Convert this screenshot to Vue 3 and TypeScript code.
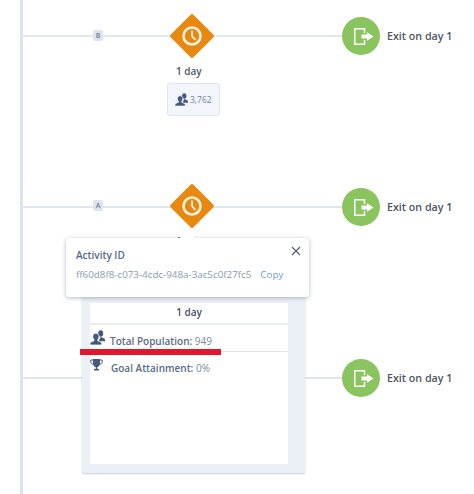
<script setup lang="ts">
interface Lane { id: string; y: number; badgeX: number }
const lanes: Lane[] = [
  { id: 'B', y: 36, badgeX: 98 },
  { id: 'A', y: 206, badgeX: 98 }
]
const exits: number[] = [36, 207, 378]
</script>

<template>
  <div class="canvas">
    <div class="trunk"></div>
    <div class="wire" :style="{ top: '35px' }"></div>
    <div class="wire" :style="{ top: '206px' }"></div>
    <div class="wire" :style="{ top: '377px' }"></div>

    <template v-for="lane in lanes" :key="lane.id">
      <span class="badge" :style="{ top: lane.y - 6 + 'px', left: lane.badgeX - 5 + 'px' }">{{ lane.id }}</span>
      <div class="diamond-wrap" :style="{ top: lane.y - 23 + 'px' }">
        <svg width="46" height="46" viewBox="0 0 46 46">
          <rect x="7" y="7" width="32" height="32" rx="2" transform="rotate(45 23 23)" fill="#e8880f" />
          <circle cx="23" cy="23" r="8.500" fill="none" stroke="#fdf3e3" stroke-width="2.600" />
          <path d="M23 17.500V23.200L26.500 27" fill="none" stroke="#fdf3e3" stroke-width="1.800" />
        </svg>
      </div>
      <div class="day-label" :style="{ top: lane.y + 28 + 'px' }">1 day</div>
    </template>

    <div class="count-box">
      <svg class="people" width="13" height="13" viewBox="0 0 14 14">
        <ellipse cx="10" cy="3.300" rx="2.300" ry="3" fill="#42597c" />
        <path d="M10 6.500L13 7.800c.6.300 1 .7 1 1.300V10.500H8Z" fill="#42597c" />
        <path d="M0 14V12.500c0-.6.3-1 1-1.300L3.800 10V9C3 8.300 2.600 7.300 2.600 6.100 2.600 4.300 3.800 3 5.500 3S8.400 4.300 8.400 6.100C8.400 7.300 8 8.300 7.200 9v1l2.800 1.200c.7.300 1 .7 1 1.300V14Z" fill="#42597c" stroke="#f2f5fa" stroke-width=".7" />
      </svg>
      <span>3,762</span>
    </div>

    <div class="exit" v-for="y in exits" :key="y" :style="{ top: y - 19 + 'px' }">
      <div class="exit-circle">
        <svg width="20" height="17" viewBox="0 0 20 17">
          <path d="M10.500 5V.8H.8V16.200H10.500V12" fill="none" stroke="#fff" stroke-width="1.500" />
          <path d="M7.500 6.500H13V4.300L19.500 8.500L13 12.700V10.500H7.500Z" fill="#fff" />
        </svg>
      </div>
      <span class="exit-text">Exit on day 1</span>
    </div>

    <div class="detail-card">
      <div class="detail-inner">
        <div class="detail-head">1 day</div>
        <div class="detail-row first">
          <svg width="15" height="15" viewBox="0 0 14 14">
            <ellipse cx="10" cy="3.300" rx="2.300" ry="3" fill="#42597c" />
            <path d="M10 6.500L13 7.800c.6.300 1 .7 1 1.300V10.500H8Z" fill="#42597c" />
            <path d="M0 14V12.500c0-.6.3-1 1-1.300L3.800 10V9C3 8.300 2.600 7.300 2.600 6.100 2.600 4.300 3.800 3 5.500 3S8.400 4.300 8.400 6.100C8.400 7.300 8 8.300 7.200 9v1l2.800 1.200c.7.300 1 .7 1 1.300V14Z" fill="#42597c" stroke="#fff" stroke-width=".7" />
          </svg>
          <span><b>Total Population:</b> 949</span>
        </div>
        <div class="detail-row second">
          <svg width="13" height="14" viewBox="0 0 13 14">
            <path d="M3 1H10V5.500C10 7.500 8.500 8.800 7.300 9V11H9V12.500H4V11H5.700V9C4.500 8.800 3 7.500 3 5.500Z" fill="#42597c" />
            <path d="M3 2H.8V3.800C.8 5.200 1.800 6.200 3.300 6.300M10 2H12.200V3.800C12.200 5.200 11.200 6.200 9.700 6.300" fill="none" stroke="#42597c" stroke-width="1" />
          </svg>
          <span class="goal"><b>Goal Attainment:</b> 0%</span>
        </div>
      </div>
    </div>

    <div class="red-bar"></div>

    <div class="popover">
      <div class="arrow"></div>
      <div class="pop-title">Activity ID</div>
      <div class="pop-id"><span>ff60d8f8-c073-4cdc-948a-3ac5c0f27fc5</span><a class="copy">Copy</a></div>
      <svg class="close" width="10" height="10" viewBox="0 0 10 10">
        <path d="M1 1L9 9M9 1L1 9" stroke="#555d6b" stroke-width="1.200" fill="none" />
      </svg>
    </div>
  </div>
</template>

<style>
html, body { margin: 0; background: #fff; }
</style>

<style scoped>
.canvas {
  position: relative;
  width: 474px;
  height: 494px;
  overflow: hidden;
  background: #fff;
  font-family: "Open Sans", "Noto Sans", sans-serif;
  color: #54698d;
}
.trunk {
  position: absolute;
  left: 20px;
  top: 0;
  width: 3px;
  height: 494px;
  background: #d8e4f2;
}
.wire {
  position: absolute;
  left: 22px;
  width: 325px;
  height: 2px;
  background: #dfe6f0;
}
.badge {
  position: absolute;
  width: 10px;
  height: 11px;
  border-radius: 2px;
  background: #dce4ef;
  font-size: 7px;
  font-weight: 600;
  line-height: 11px;
  text-align: center;
  color: #6b7d99;
}
.diamond-wrap {
  position: absolute;
  left: 169px;
  width: 46px;
  height: 46px;
}
.diamond-wrap svg { display: block; }
.day-label {
  position: absolute;
  left: 176px;
  font-size: 10px;
  font-weight: 600;
  line-height: 14px;
  color: #4f5a6b;
}
.count-box {
  position: absolute;
  left: 167px;
  top: 83px;
  box-sizing: border-box;
  width: 53px;
  height: 33px;
  display: flex;
  align-items: center;
  gap: 2px;
  padding-left: 7px;
  background: #f2f5fa;
  border: 1px solid #dfe6f1;
  border-radius: 3px;
  font-size: 8.500px;
  color: #75859e;
}
.exit {
  position: absolute;
  left: 342px;
  display: flex;
  align-items: center;
  gap: 7px;
}
.exit-circle {
  box-sizing: border-box;
  width: 38px;
  height: 38px;
  padding-left: 5px;
  border-radius: 50%;
  background: #8ac45f;
  display: flex;
  align-items: center;
  justify-content: center;
}
.exit-text {
  font-size: 10.700px;
  font-weight: 600;
  color: #4f5562;
  white-space: nowrap;
}
.detail-card {
  position: absolute;
  left: 82px;
  top: 290px;
  box-sizing: border-box;
  width: 223px;
  height: 183px;
  padding: 13px 17px 9px 8px;
  background: #ebeff6;
  box-shadow: 0 1px 2px rgba(90, 105, 130, .35);
  border-radius: 2px;
}
.detail-inner {
  height: 100%;
  background: #fff;
}
.detail-head {
  box-sizing: border-box;
  height: 22px;
  padding-top: 2px;
  text-align: center;
  font-size: 10px;
  font-weight: 600;
  line-height: 14px;
  color: #4a5262;
  border-bottom: 2px solid #e8ecf3;
}
.detail-row {
  box-sizing: border-box;
  height: 27px;
  padding-top: 8px;
  display: flex;
  align-items: flex-start;
  gap: 5px;
  font-size: 10px;
  line-height: 16px;
  color: #7d8a9f;
}
.detail-row svg { margin-top: -3px; flex: none; }
.detail-row.second svg { margin-top: -2px; }
.detail-row b { color: #5a6a85; font-weight: 600; }
.detail-row .goal { margin-left: 3px; }
.detail-row.first { border-bottom: 1px solid #dfe4ec; }
.red-bar {
  position: absolute;
  left: 80px;
  top: 349px;
  width: 141px;
  height: 6px;
  background: #e2162c;
}
.popover {
  position: absolute;
  left: 66px;
  top: 238px;
  box-sizing: border-box;
  width: 243px;
  height: 59px;
  padding: 10px 10px 0;
  background: #fff;
  border-radius: 3px;
  box-shadow: 0 1px 4px rgba(70, 85, 110, .4);
}
.arrow {
  position: absolute;
  left: 117px;
  top: -5px;
  width: 10px;
  height: 10px;
  background: #fff;
  transform: rotate(45deg);
}
.pop-title {
  position: relative;
  font-size: 10px;
  font-weight: 600;
  line-height: 14px;
  color: #54698d;
}
.pop-id {
  position: relative;
  display: flex;
  gap: 9px;
  margin-top: 6px;
  font-size: 9.800px;
  line-height: 13px;
  color: #8a9bb3;
  white-space: nowrap;
}
.copy { color: #6d9fc9; }
.close {
  position: absolute;
  right: 8px;
  top: 8px;
}
</style>
